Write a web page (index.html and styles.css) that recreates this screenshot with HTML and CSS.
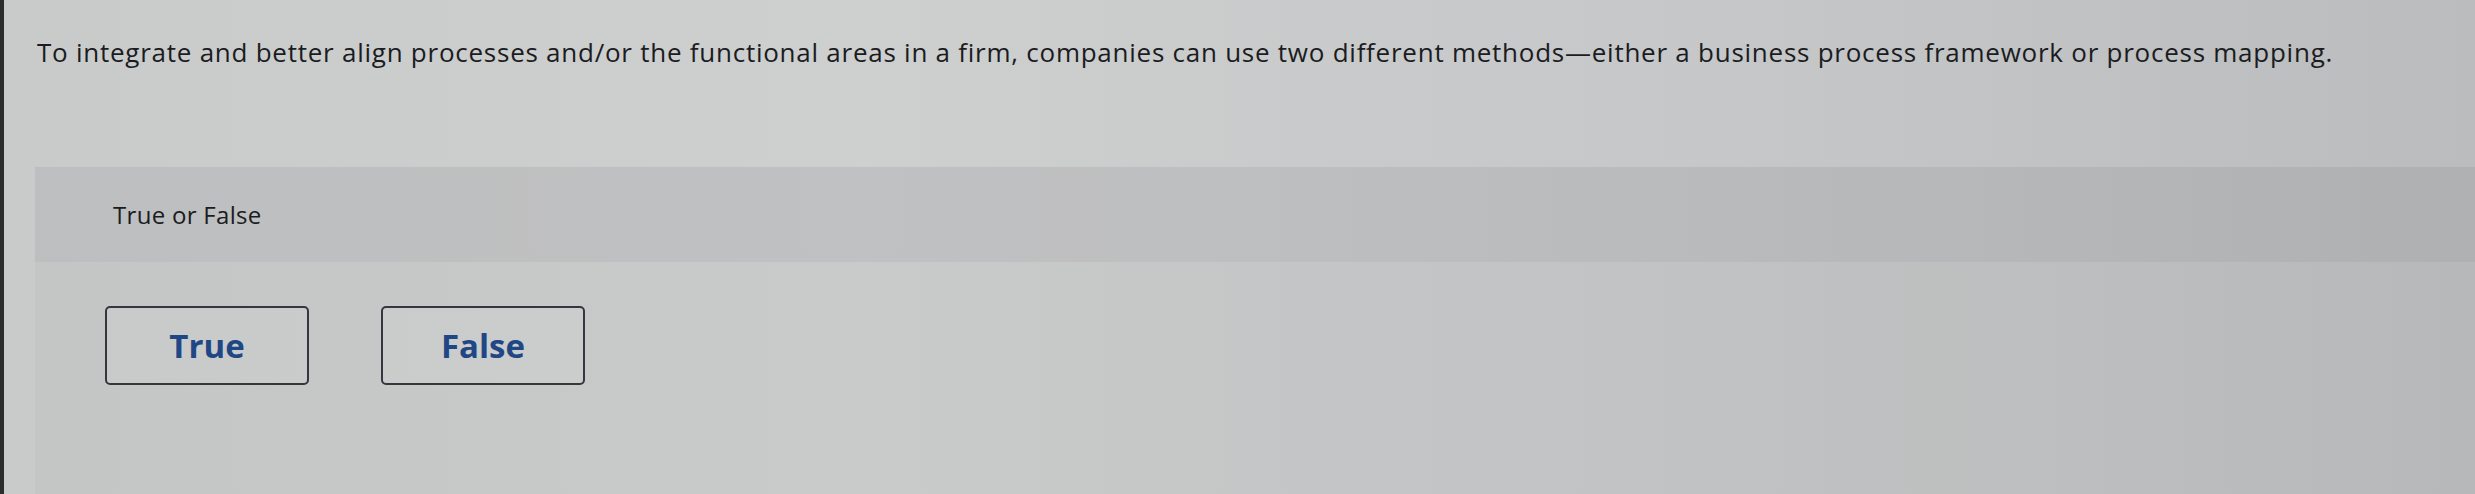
FILE: index.html
```html
<!DOCTYPE html>
<html lang="en">

<head>
  <meta charset="UTF-8" />
  <title>True or False</title>
  <meta name="viewport" content="width=device-width, initial-scale=1" />
  <link rel="stylesheet" href="styles.css">
</head>

<body>
  <div class="screen">
    <p class="prompt">To integrate and better align processes and/or the functional areas in a firm, companies can use two different methods—either a business process framework or process mapping.</p>

    <!-- answer panel -->
    <div class="question">
      <div class="question-head">True or False</div>
      <div class="choices">
        <button class="choice">True</button>
        <button class="choice">False</button>
      </div>
    </div>
  </div>
</body>

</html>
```

FILE: styles.css
```css
body {
  margin: 0;
  font-family: 'Open Sans', 'Liberation Sans', sans-serif;
  background: #c6c8c9;
  overflow: hidden;
}

.screen {
  min-height: 100vh;
  border-left: 4px solid #2c2c2e;
  background: linear-gradient(90deg, #c9cbcb 0%, #cecfcf 35%, #c5c7c8 70%, #babcbd 100%);
}

.prompt {
  margin: 0;
  padding: 35px 0 0 33px;
  height: 167px;
  box-sizing: border-box;
  font-size: 26px;
  line-height: 34px;
  letter-spacing: 0.75px;
  color: #1b1c21;
  white-space: nowrap;
}

.question {
  margin-left: 31px;
  height: 340px;
  background: rgba(120, 122, 124, 0.05);
}

.question-head {
  height: 95px;
  display: flex;
  align-items: center;
  padding-left: 78px;
  font-size: 24px;
  letter-spacing: 0.3px;
  color: #1b1c21;
  background: rgba(90, 92, 95, 0.07);
}

.choices {
  display: flex;
  gap: 72px;
  padding: 44px 0 0 70px;
}

.choice {
  width: 204px;
  height: 79px;
  border: 2px solid #34373e;
  border-radius: 5px;
  background: rgba(255, 255, 255, 0.08);
  font-family: 'Open Sans', 'Liberation Sans', sans-serif;
  font-size: 33px;
  font-weight: 700;
  color: #1f4785;
  cursor: pointer;
}
```
